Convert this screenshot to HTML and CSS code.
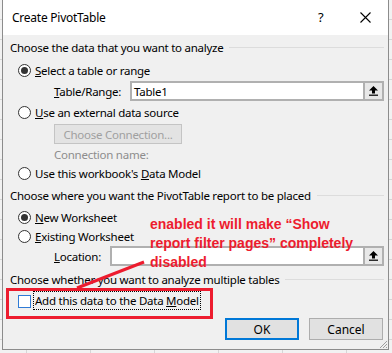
FILE: index.html
```html
<!DOCTYPE html>
<html lang="en">
<head>
  <meta charset="UTF-8">
  <title>Create PivotTable</title>
  <link rel="stylesheet" href="styles.css">
</head>
<body>
  <div class="dialog">
    <div class="titlebar">
      <span class="title">Create PivotTable</span>
      <span class="help">?</span>
      <svg class="close" width="11" height="11" viewBox="0 0 11 11">
        <path d="M0.5 0.5 L10.5 10.5 M10.5 0.5 L0.5 10.5" stroke="#000" stroke-width="1.1"/>
      </svg>
    </div>

    <div class="content">
      <div class="group-title g1"><span>Choose the data that you want to analyze</span><i></i></div>

      <div class="radio-row r1"><span class="radio checked"></span><span><u>S</u>elect a table or range</span></div>
      <div class="field-row f1">
        <span class="field-label wide"><u>T</u>able/Range:</span>
        <div class="ref-input"><span>Table1</span></div>
        <div class="ref-btn">
          <svg width="9" height="10" viewBox="0 0 9 10"><path d="M4.5 0 L9 4.5 H6 V7.5 H3 V4.5 H0 Z" fill="#000"/><rect x="0" y="8.6" width="9" height="1.2" fill="#000"/></svg>
        </div>
      </div>
      <div class="radio-row r2"><span class="radio"></span><span><u>U</u>se an external data source</span></div>
      <div class="conn-row"><button class="conn-btn" disabled>Choose Connection...</button></div>
      <div class="muted-row">Connection name:</div>
      <div class="radio-row r3"><span class="radio"></span><span>Use this workbook's <u>D</u>ata Model</span></div>

      <div class="group-title g2"><span>Choose where you want the PivotTable report to be placed</span><i></i></div>
      <div class="radio-row r4"><span class="radio checked"></span><span><u>N</u>ew Worksheet</span></div>
      <div class="radio-row r5"><span class="radio"></span><span><u>E</u>xisting Worksheet</span></div>
      <div class="field-row f2">
        <span class="field-label"><u>L</u>ocation:</span>
        <div class="ref-input"></div>
        <div class="ref-btn">
          <svg width="9" height="10" viewBox="0 0 9 10"><path d="M4.5 0 L9 4.5 H6 V7.5 H3 V4.5 H0 Z" fill="#000"/><rect x="0" y="8.6" width="9" height="1.2" fill="#000"/></svg>
        </div>
      </div>

      <div class="group-title g3"><span>Choose whether you want to analyze multiple tables</span><i></i></div>
      <div class="check-row">
        <span class="checkbox"></span>
        <span class="focus-label">Add this data to the Data <u>M</u>odel</span>
      </div>

      <div class="actions">
        <button class="btn default">OK</button>
        <button class="btn">Cancel</button>
      </div>
    </div>

    <svg class="grip" width="10" height="10" viewBox="0 0 10 10">
      <path d="M9 2 L2 9 M9 5 L5 9 M9 8 L8 9" stroke="#a0a0a0" stroke-width="1"/>
    </svg>

    <!-- annotation drawn over the dialog -->
    <div class="note">
      <div>enabled it will make “Show</div>
      <div>report filter pages” completely</div>
      <div>disabled</div>
    </div>
    <svg class="note-line" width="386" height="349" viewBox="0 0 386 349">
      <line x1="74" y1="288" x2="141" y2="262" stroke="#ed1c2e" stroke-width="3"/>
    </svg>
    <div class="note-box"></div>
  </div>
</body>
</html>
```

FILE: styles.css
```css
body {
  margin: 0;
  width: 392px;
  height: 353px;
  overflow: hidden;
  font-family: "Noto Sans", sans-serif;
  font-size: 11.5px;
  letter-spacing: -0.25px;
  color: #000;
  background-color: #f2f2f2;
  background-image:
    repeating-linear-gradient(to right, transparent 0 26px, #d6d6d6 26px 27px, transparent 27px 64px),
    repeating-linear-gradient(to bottom, transparent 0 19px, #d6d6d6 19px 20px);
}
.dialog {
  position: relative;
  margin-left: 2px;
  width: 387px;
  height: 350px;
  box-sizing: border-box;
  border: 1px solid #8c8c8c;
  border-top: none;
  background-color: #f0f0f0;
}
.titlebar {
  height: 35px;
  background-color: #fff;
  display: flex;
  align-items: center;
  padding-left: 9px;
  padding-bottom: 1px;
  box-sizing: border-box;
}
.title {
  flex: 1;
  font-size: 12px;
}
.help {
  width: 12px;
  margin-right: 30px;
  font-size: 13px;
}
.close {
  margin-right: 17px;
}
.content {
  padding: 0 4px 0 7px;
}
.group-title {
  display: flex;
  align-items: center;
}
.group-title i {
  flex: 1;
  height: 1px;
  background-color: #dcdcdc;
  margin-left: 6px;
  margin-top: 1px;
}
.g1 { height: 24px; }
.g2 { height: 26px; }
.g3 { height: 24px; }
.radio-row {
  display: flex;
  align-items: center;
  padding-left: 8px;
  gap: 4px;
}
.r1, .r2 { height: 22px; }
.r3 { height: 17px; }
.r4 { height: 19px; }
.r5 { height: 18px; }
.radio {
  width: 13px;
  height: 13px;
  box-sizing: border-box;
  border: 1px solid #333;
  border-radius: 50%;
  background-color: #fff;
  display: flex;
  align-items: center;
  justify-content: center;
}
.radio.checked::after {
  content: "";
  width: 7px;
  height: 7px;
  border-radius: 50%;
  background-color: #333;
}
.field-row {
  display: flex;
  align-items: center;
  padding-left: 44px;
}
.f1 { height: 20px; }
.f2 { height: 22px; }
.field-label {
  width: 56px;
}
.field-label.wide {
  width: 76px;
}
.ref-input {
  flex: 1;
  height: 20px;
  box-sizing: border-box;
  border: 2px solid #b0b0b0;
  border-right: none;
  background-color: #fff;
  display: flex;
  align-items: center;
  padding-left: 2px;
}
.ref-btn {
  width: 21px;
  height: 20px;
  box-sizing: border-box;
  border: 2px solid #b0b0b0;
  background-color: #e8e8e8;
  display: flex;
  align-items: center;
  justify-content: center;
}
.conn-row {
  height: 21px;
  padding-left: 44px;
  padding-top: 1px;
  box-sizing: border-box;
}
.conn-btn {
  width: 128px;
  height: 20px;
  padding: 0;
  font-family: inherit;
  font-size: 11.5px;
  letter-spacing: -0.25px;
  color: #a0a0a0;
  background-color: #e3e3e3;
  border: 1px solid #c4c4c4;
}
.muted-row {
  height: 21px;
  padding-left: 44px;
  color: #8d8d8d;
  display: flex;
  align-items: center;
}
.check-row {
  height: 19px;
  display: flex;
  align-items: center;
  padding-left: 8px;
  gap: 2px;
}
.checkbox {
  width: 13px;
  height: 13px;
  box-sizing: border-box;
  border: 1px solid #2f7bd6;
  background-color: #fff;
  margin-top: 2px;
}
.focus-label {
  border: 1px dotted #000;
  padding: 0 1px;
  height: 19px;
  box-sizing: border-box;
  line-height: 17px;
}
.actions {
  display: flex;
  justify-content: flex-end;
  gap: 10px;
  margin-top: 8px;
  padding-right: 1px;
}
.btn {
  width: 74px;
  height: 22px;
  padding: 0;
  font-family: inherit;
  font-size: 12px;
  color: #000;
  background-color: #e1e1e1;
  border: 1px solid #adadad;
}
.btn.default {
  border: 2px solid #0078d7;
}
.grip {
  position: absolute;
  right: 0;
  bottom: 0;
}
.note {
  position: absolute;
  left: 147px;
  top: 215px;
  white-space: nowrap;
  font-family: "Liberation Sans", sans-serif;
  font-weight: bold;
  font-size: 14px;
  letter-spacing: 0;
  line-height: 19px;
  color: #ed1c2e;
}
.note-line {
  position: absolute;
  left: 0;
  top: 0;
}
.note-box {
  position: absolute;
  left: 3px;
  top: 288px;
  width: 207px;
  height: 31px;
  box-sizing: border-box;
  border: 3px solid #ed1c2e;
}
```
